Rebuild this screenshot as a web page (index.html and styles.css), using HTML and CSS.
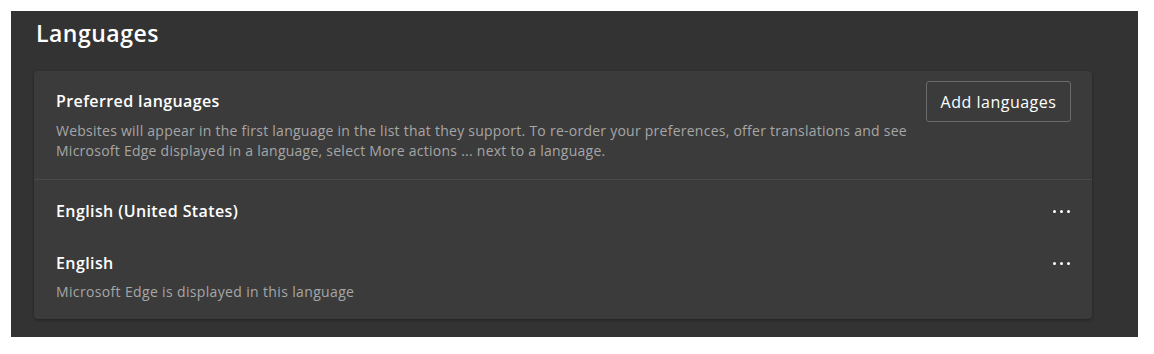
FILE: index.html
```html
<!DOCTYPE html>
<html lang="en">
<head>
<meta charset="utf-8">
<title>Languages</title>
<link rel="stylesheet" href="styles.css">
</head>
<body>
<div class="panel">
  <h1 class="page-title">Languages</h1>
  <section class="card">
    <div class="card-head">
      <div class="head-text">
        <div class="item-title">Preferred languages</div>
        <div class="item-desc">Websites will appear in the first language in the list that they support. To re-order your preferences, offer translations and see<br>Microsoft Edge displayed in a language, select More actions ... next to a language.</div>
      </div>
      <button class="btn" type="button">Add languages</button>
    </div>
    <div class="lang-row first">
      <div class="lang-text">
        <div class="item-title">English (United States)</div>
      </div>
      <button class="more" type="button" aria-label="More actions"><span></span><span></span><span></span></button>
    </div>
    <div class="lang-row second">
      <div class="lang-text">
        <div class="item-title">English</div>
        <div class="item-desc sub">Microsoft Edge is displayed in this language</div>
      </div>
      <button class="more" type="button" aria-label="More actions"><span></span><span></span><span></span></button>
    </div>
  </section>
</div>
</body>
</html>
```

FILE: styles.css
```css
html, body {
  margin: 0;
  padding: 0;
  background: #ffffff;
}

body {
  font-family: "Segoe UI", "Open Sans", "Noto Sans", sans-serif;
  color: #ffffff;
}

.panel {
  box-sizing: border-box;
  margin: 11px 0 0 11px;
  width: 1127px;
  height: 326px;
  background: #333333;
  padding: 7px 46px 0 23px;
}

.page-title {
  margin: 0 0 23px 2px;
  font-size: 23px;
  line-height: 30px;
  font-weight: 600;
  letter-spacing: 0.5px;
  color: #ffffff;
}

.card {
  background: #3b3b3b;
  border-radius: 4px;
  box-shadow: 0 1px 3px rgba(0, 0, 0, 0.35);
  height: 248px;
  box-sizing: border-box;
}

.card-head {
  display: flex;
  justify-content: space-between;
  align-items: flex-start;
  box-sizing: border-box;
  height: 109px;
  padding: 20px 21px 0 22px;
  border-bottom: 1px solid #4a4a4a;
}

.item-title {
  font-size: 16px;
  line-height: 20px;
  font-weight: 600;
  letter-spacing: 0.4px;
  color: #ffffff;
}

.item-desc {
  margin-top: 10px;
  font-size: 14px;
  line-height: 20px;
  letter-spacing: 0.25px;
  color: #a6a6a6;
}

.btn {
  margin-top: -10px;
  width: 145px;
  height: 41px;
  box-sizing: border-box;
  background: transparent;
  border: 1px solid #6b6b6b;
  border-radius: 3px;
  color: #ffffff;
  font-family: inherit;
  font-size: 16px;
  letter-spacing: 0.5px;
  padding: 0;
}

.lang-row {
  display: flex;
  justify-content: space-between;
  align-items: flex-start;
  padding: 21px 21px 0 22px;
}

.lang-row.first {
  height: 52px;
  box-sizing: border-box;
}

.item-desc.sub {
  margin-top: 9px;
  letter-spacing: 0.35px;
}

.more {
  display: flex;
  gap: 4px;
  align-items: center;
  height: 20px;
  padding: 0;
  margin-right: 1px;
  background: transparent;
  border: 0;
}

.more span {
  width: 3px;
  height: 3px;
  border-radius: 50%;
  background: #ffffff;
}
```
